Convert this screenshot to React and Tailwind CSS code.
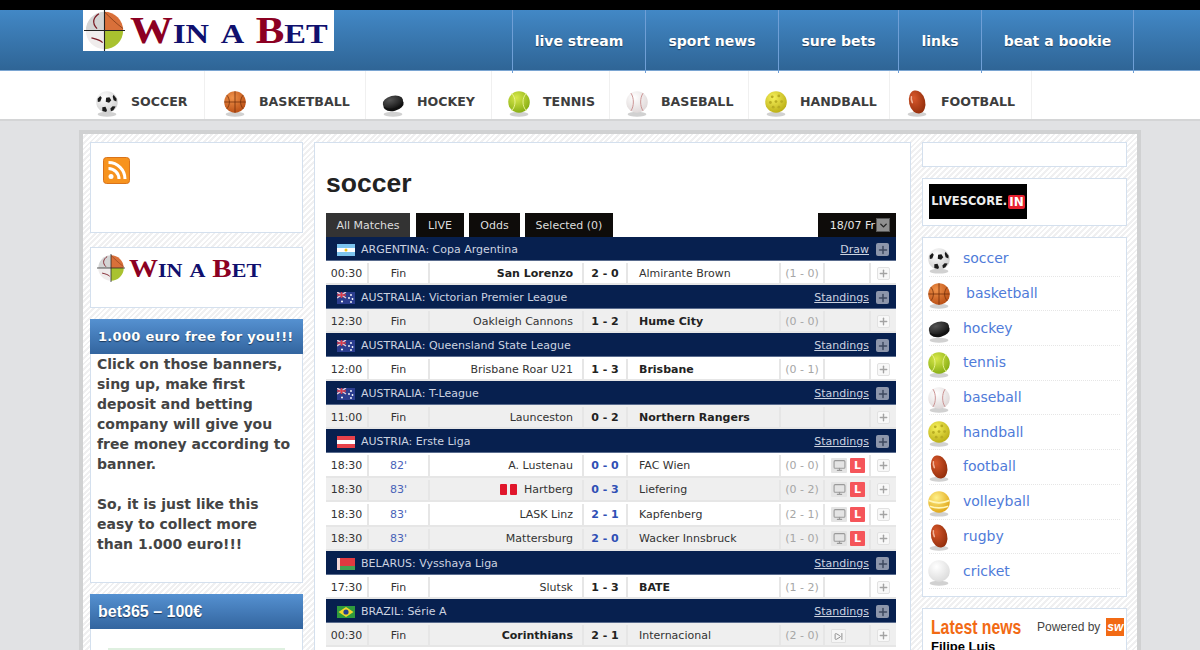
import { Monitor, Plus, ChevronDown, SkipForward } from 'lucide-react'

const hatch = 'bg-[repeating-linear-gradient(135deg,#ffffff_0px,#ffffff_2px,#f0f0f1_2px,#f0f0f1_4px)]'

const navLinks = [
  { label: 'live stream', w: 'w-[133px]' },
  { label: 'sport news', w: 'w-[133px]' },
  { label: 'sure bets', w: 'w-[120px]' },
  { label: 'links', w: 'w-[83px]' },
  { label: 'beat a bookie', w: 'w-[152px]' },
]

const sports = [
  { kind: 'soccer', label: 'SOCCER', w: 'w-[125px] pl-[12px]' },
  { kind: 'basketball', label: 'BASKETBALL', w: 'w-[161px] pl-[15px]' },
  { kind: 'hockey', label: 'HOCKEY', w: 'w-[126px] pl-[12px]' },
  { kind: 'tennis', label: 'TENNIS', w: 'w-[118px] pl-[12px]' },
  { kind: 'baseball', label: 'BASEBALL', w: 'w-[139px] pl-[12px]' },
  { kind: 'handball', label: 'HANDBALL', w: 'w-[141px] pl-[12px]' },
  { kind: 'football', label: 'FOOTBALL', w: 'w-[142px] pl-[12px]' },
]

const sideSports = ['soccer', 'basketball', 'hockey', 'tennis', 'baseball', 'handball', 'football', 'volleyball', 'rugby', 'cricket']

const leagues = [
  {
    flag: 'ar', name: 'ARGENTINA: Copa Argentina', link: 'Draw',
    rows: [{ t: '00:30', s: 'Fin', home: 'San Lorenzo', score: '2 - 0', away: 'Almirante Brown', ht: '(1 - 0)', win: 'home', alt: false }],
  },
  {
    flag: 'au', name: 'AUSTRALIA: Victorian Premier League', link: 'Standings',
    rows: [{ t: '12:30', s: 'Fin', home: 'Oakleigh Cannons', score: '1 - 2', away: 'Hume City', ht: '(0 - 0)', win: 'away', alt: true }],
  },
  {
    flag: 'au', name: 'AUSTRALIA: Queensland State League', link: 'Standings',
    rows: [{ t: '12:00', s: 'Fin', home: 'Brisbane Roar U21', score: '1 - 3', away: 'Brisbane', ht: '(0 - 1)', win: 'away', alt: false }],
  },
  {
    flag: 'au', name: 'AUSTRALIA: T-League', link: 'Standings',
    rows: [{ t: '11:00', s: 'Fin', home: 'Launceston', score: '0 - 2', away: 'Northern Rangers', ht: '', win: 'away', alt: true }],
  },
  {
    flag: 'at', name: 'AUSTRIA: Erste Liga', link: 'Standings',
    rows: [
      { t: '18:30', s: "82'", home: 'A. Lustenau', score: '0 - 0', away: 'FAC Wien', ht: '(0 - 0)', live: true, alt: false },
      { t: '18:30', s: "83'", home: 'Hartberg', score: '0 - 3', away: 'Liefering', ht: '(0 - 2)', live: true, cards: true, alt: true },
      { t: '18:30', s: "83'", home: 'LASK Linz', score: '2 - 1', away: 'Kapfenberg', ht: '(2 - 1)', live: true, alt: false },
      { t: '18:30', s: "83'", home: 'Mattersburg', score: '2 - 0', away: 'Wacker Innsbruck', ht: '(1 - 0)', live: true, alt: true },
    ],
  },
  {
    flag: 'by', name: 'BELARUS: Vysshaya Liga', link: 'Standings',
    rows: [{ t: '17:30', s: 'Fin', home: 'Slutsk', score: '1 - 3', away: 'BATE', ht: '(1 - 2)', win: 'away', alt: false }],
  },
  {
    flag: 'br', name: 'BRAZIL: Série A', link: 'Standings',
    rows: [{ t: '00:30', s: 'Fin', home: 'Corinthians', score: '2 - 1', away: 'Internacional', ht: '(2 - 0)', win: 'home', video: true, alt: true }],
  },
]

function Ball({ kind, size = 30 }) {
  const colors = {
    soccer: ['#ffffff', '#c9c9c9'],
    basketball: ['#f0924a', '#b5480f'],
    tennis: ['#d8e84a', '#7fa80f'],
    baseball: ['#ffffff', '#dcd4d4'],
    handball: ['#f6f05a', '#b5a80f'],
    volleyball: ['#fff08a', '#dd9f0a'],
    cricket: ['#ffffff', '#d8d8d8'],
    hockey: ['#555555', '#111111'],
    football: ['#d9582c', '#8c2a08'],
    rugby: ['#d9582c', '#8c2a08'],
  }
  const [from, to] = colors[kind]
  const fill = `url(#ball-${kind})`
  return (
    <svg width={size} height={size} viewBox="0 -1.5 32 32" className="shrink-0">
      <defs>
        <radialGradient id={`ball-${kind}`} cx="0.38" cy="0.3" r="0.8">
          <stop offset="0" stopColor={from} />
          <stop offset="1" stopColor={to} />
        </radialGradient>
      </defs>
      <ellipse cx="16" cy="27.5" rx="10" ry="2.6" fill="#9a9a9a" opacity="0.45" />
      {kind === 'hockey' && (
        <g transform="rotate(-14 16 15)">
          <ellipse cx="16" cy="17.5" rx="11" ry="6.5" fill="#111" />
          <ellipse cx="16" cy="14.5" rx="11" ry="6.5" fill={fill} />
        </g>
      )}
      {(kind === 'football' || kind === 'rugby') && (
        <g transform="rotate(-14 16 14)">
          <ellipse cx="16" cy="14.5" rx="8.6" ry="12.5" fill={fill} />
          <path d="M11.5 7.5c-1 2-1 4.5-.6 6.5" stroke="#f2b49a" strokeWidth="1.6" fill="none" strokeLinecap="round" />
        </g>
      )}
      {!['hockey', 'football', 'rugby'].includes(kind) && <circle cx="16" cy="14.5" r="11.5" fill={fill} />}
      {kind === 'soccer' && (
        <g fill="#1b1b1b">
          <path d="M15 10l3.6-.6 2 3.1-2.4 2.9-3.5-1.1z" />
          <path d="M6 11l2.8-3 1.6 2-1.6 4-2.6.6z" />
          <path d="M23 6.8l3.2 4.2-.2 3-2.9-1.4-1-3.6z" />
          <path d="M11 20l3.4-.4 1.6 3.6-1 2-4-1.2z" />
          <path d="M22 19l3.2.4-2.4 4-2.6 1-.6-3z" />
        </g>
      )}
      {kind === 'basketball' && (
        <g stroke="#6e2c08" strokeWidth="0.8" fill="none">
          <path d="M4.5 14.5h23M16 3v23" />
          <path d="M7 7c4 4 4 11 0 15M25 7c-4 4-4 11 0 15" />
        </g>
      )}
      {kind === 'tennis' && <path d="M8 5c5 5 5 14 0 19M24 5c-5 5-5 14 0 19" stroke="#eef59a" strokeWidth="0.9" fill="none" />}
      {kind === 'baseball' && <path d="M9.5 5c3.5 5 3.5 14 0 19M22.5 5c-3.5 5-3.5 14 0 19" stroke="#c98f8f" strokeWidth="1" fill="none" />}
      {kind === 'handball' && (
        <g fill="#b9ad22">
          <circle cx="12" cy="9" r="1.5" /><circle cx="19" cy="8" r="1.5" /><circle cx="10" cy="15" r="1.5" />
          <circle cx="16" cy="14" r="1.5" /><circle cx="22" cy="14" r="1.5" /><circle cx="13" cy="20" r="1.5" /><circle cx="19" cy="20" r="1.5" />
        </g>
      )}
      {kind === 'volleyball' && <path d="M5 13c7 3 15 3 22 0M6 19c6 2 14 2 20 0" stroke="#fff6b8" strokeWidth="1.8" fill="none" />}
    </svg>
  )
}

function LogoBall({ size }) {
  return (
    <svg width={size} height={size} viewBox="0 0 44 44" className="shrink-0">
      <path d="M22 22V2a20 20 0 0 1 20 20z" fill="#d9703a" />
      <path d="M22 22h20a20 20 0 0 1-20 20z" fill="#a9c22f" />
      <path d="M22 22v20A20 20 0 0 1 2 22z" fill="#efecec" />
      <path d="M22 22H2A20 20 0 0 1 22 2z" fill="#d4d4d4" />
      <path d="M16 4c-6 4-8 10-2 16M8 30c4 1 9 2 12 5" stroke="#7a1b25" strokeWidth="1.4" fill="none" />
      <path d="M22 2c6 6 12 12 20 18" stroke="#7c3613" strokeWidth="0.8" fill="none" />
      <path d="M22 0v44M0 22h44" stroke="#222" strokeWidth="1.2" />
    </svg>
  )
}

function RssIcon() {
  return (
    <svg width="27" height="27" viewBox="0 0 27 27">
      <rect x="0.5" y="0.5" width="26" height="26" rx="3" fill="#f7931e" stroke="#d9731a" />
      <circle cx="8" cy="19.5" r="2.5" fill="#fff" />
      <path d="M5.5 11.5a10.5 10.5 0 0 1 10.5 10.5" stroke="#fff" strokeWidth="3" fill="none" />
      <path d="M5.5 5.5a16.5 16.5 0 0 1 16.5 16.5" stroke="#fff" strokeWidth="3" fill="none" />
    </svg>
  )
}

function Flag({ code }) {
  return (
    <svg width="18" height="12" viewBox="0 0 18 12" className="shrink-0">
      {code === 'ar' && (
        <>
          <rect width="18" height="12" fill="#fff" />
          <rect width="18" height="4" fill="#7cc4ee" />
          <rect y="8" width="18" height="4" fill="#7cc4ee" />
          <circle cx="9" cy="6" r="1.5" fill="#f0c419" />
        </>
      )}
      {code === 'au' && (
        <>
          <rect width="18" height="12" fill="#2b3d8f" />
          <path d="M0 0l9 6M9 0L0 6" stroke="#e8c8d0" strokeWidth="1.5" />
          <path d="M4.5 0v6M0 3h9" stroke="#d63a4a" strokeWidth="1.5" />
          <circle cx="14" cy="3" r="0.9" fill="#fff" /><circle cx="12" cy="6" r="0.9" fill="#fff" /><circle cx="15.5" cy="7" r="0.9" fill="#fff" /><circle cx="14" cy="10" r="0.9" fill="#fff" /><circle cx="5" cy="9.5" r="1" fill="#fff" />
        </>
      )}
      {code === 'at' && (
        <>
          <rect width="18" height="12" fill="#e8414a" />
          <rect y="4" width="18" height="4" fill="#fff" />
        </>
      )}
      {code === 'by' && (
        <>
          <rect width="18" height="8" fill="#e23a40" />
          <rect y="8" width="18" height="4" fill="#46a152" />
          <rect width="3" height="12" fill="#f4d8d8" />
        </>
      )}
      {code === 'br' && (
        <>
          <rect width="18" height="12" fill="#2f9a3d" />
          <path d="M9 1l7.5 5L9 11 1.5 6z" fill="#f3d72a" />
          <circle cx="9" cy="6" r="2.6" fill="#27408f" />
        </>
      )}
    </svg>
  )
}

function Logo({ big }) {
  if (big) {
    return (
      <div className="flex items-center h-[41px] w-[251px] bg-white pl-[1px] font-['Liberation_Serif',serif] font-bold">
        <LogoBall size={41} />
        <span className="ml-[5px] flex origin-left scale-x-[1.16] items-baseline whitespace-nowrap leading-none">
          <span className="text-[37px] text-[#8c0022]">W</span>
          <span className="text-[28px] text-[#10106e]">IN</span>
          <span className="ml-[10px] text-[28px] text-[#10106e]">A</span>
          <span className="ml-[10px] text-[37px] text-[#8c0022]">B</span>
          <span className="text-[28px] text-[#10106e]">ET</span>
        </span>
      </div>
    )
  }
  return (
    <div className="flex items-center h-[28px] font-['Liberation_Serif',serif] font-bold">
      <LogoBall size={28} />
      <span className="ml-[4px] flex origin-left scale-x-[1.16] items-baseline whitespace-nowrap leading-none">
        <span className="text-[25px] text-[#8c0022]">W</span>
        <span className="text-[19px] text-[#10106e]">IN</span>
        <span className="ml-[6px] text-[19px] text-[#10106e]">A</span>
        <span className="ml-[6px] text-[25px] text-[#8c0022]">B</span>
        <span className="text-[19px] text-[#10106e]">ET</span>
      </span>
    </div>
  )
}

function BoxPlus({ dark }) {
  return dark ? (
    <span className="flex h-[13px] w-[13px] items-center justify-center rounded-[2px] bg-[#8d96ab]">
      <Plus size={12} strokeWidth={3} className="text-[#3f4a60]" />
    </span>
  ) : (
    <span className="flex h-[13px] w-[13px] items-center justify-center rounded-[2px] border border-[#e2e2e2] bg-[#f8f8f8]">
      <Plus size={11} strokeWidth={3} className="text-[#a3a3a3]" />
    </span>
  )
}

function LeagueRow({ league }) {
  return (
    <div className="flex h-6 items-center bg-[#07204f] border-b border-[#5a6c8e] pl-[11px] pt-[2px] text-[#ccd3e0]">
      <Flag code={league.flag} />
      <span className="ml-[6px] flex-1">{league.name}</span>
      <a className="underline">{league.link}</a>
      <span className="ml-[7px] mr-[7px]"><BoxPlus dark /></span>
    </div>
  )
}

function MatchRow({ row }) {
  const bg = row.alt ? 'bg-[#efefef]' : 'bg-white'
  const height = row.live ? 'h-[24.5px]' : 'h-6'
  const scoreColor = row.live ? 'text-[#2f4fb5]' : 'text-[#222]'
  return (
    <div className={`flex ${height} items-center border-b-2 border-[#e6e6e6] pt-[2px] text-[#333] ${bg}`}>
      <div className="flex h-full w-[43px] items-center justify-center border-r-2 border-[#e6e6e6]">{row.t}</div>
      <div className={`flex h-full w-[61px] items-center justify-center border-r-2 border-[#e6e6e6] ${row.live ? 'text-[#4a63b8]' : ''}`}>{row.s}</div>
      <div className={`flex h-full w-[154px] items-center justify-end gap-[7px] border-r-2 border-[#e6e6e6] pr-[9px] ${row.win === 'home' ? 'font-bold text-[#222]' : ''}`}>
        {row.cards && (
          <span className="flex gap-[3px]">
            <span className="h-[11px] w-[7px] rounded-[1px] bg-[#e0162b]" />
            <span className="h-[11px] w-[7px] rounded-[1px] bg-[#e0162b]" />
          </span>
        )}
        {row.home}
      </div>
      <div className={`flex h-full w-[44px] items-center justify-center border-r-2 border-[#e6e6e6] font-bold ${scoreColor}`}>{row.score}</div>
      <div className={`flex h-full w-[153px] items-center border-r-2 border-[#e6e6e6] pl-[11px] ${row.win === 'away' ? 'font-bold text-[#222]' : ''}`}>{row.away}</div>
      <div className="flex h-full w-[44px] items-center justify-center border-r-2 border-[#e6e6e6] text-[#a6a6a6]">{row.ht}</div>
      <div className="flex h-full w-[46px] items-center gap-[3px] border-r-2 border-[#e6e6e6] pl-[6px]">
        {row.live && (
          <>
            <span className="flex h-[15px] w-[16px] items-center justify-center rounded-[1px] bg-[#e4e4e4]">
              <Monitor size={13} strokeWidth={2} className="text-[#9a9a9a]" />
            </span>
            <span className="flex h-[15px] w-[15px] items-center justify-center rounded-[1px] bg-[#f5555a] text-[11px] font-bold text-white">L</span>
          </>
        )}
        {row.video && (
          <span className="mt-[2px] flex h-[14px] w-[15px] items-center justify-center rounded-[1px] border border-[#e0e0e0] bg-[#f5f5f5]">
            <SkipForward size={9} strokeWidth={2.5} className="text-[#8a8a8a]" />
          </span>
        )}
      </div>
      <div className="flex h-full w-[25px] items-center justify-center">
        <BoxPlus />
      </div>
    </div>
  )
}

export default function App() {
  return (
    <div className="h-[650px] w-[1200px] overflow-hidden bg-[#e1e2e4] font-['DejaVu_Sans',sans-serif]">
      <div className="h-[10px] bg-black" />
      <header className="h-[61px] bg-linear-to-b from-[#4288c6] to-[#2f6596] border-b border-[#7aa5d2]">
        <div className="flex items-start">
          <div className="ml-[83px] w-[429px]">
            <Logo big />
          </div>
          <nav className="flex h-[63px] border-l border-[#6f9fd6]">
            {navLinks.map(link => (
              <a key={link.label} className={`${link.w} flex items-center justify-center border-r border-[#6f9fd6] text-[14px] font-bold text-white [text-shadow:0_1px_1px_#1e3d5c]`}>
                {link.label}
              </a>
            ))}
          </nav>
        </div>
      </header>

      <div className="h-[50px] bg-white border-b-2 border-[#d4d5d6]">
        <div className="ml-[80px] flex h-full">
          {sports.map(sport => (
            <div key={sport.kind} className={`${sport.w} flex items-center gap-[9px] border-r border-[#f0f0f0] pt-[14px] text-[12.6px] font-bold text-[#3d3d3d]`}>
              <Ball kind={sport.kind} />
              <span>{sport.label}</span>
            </div>
          ))}
        </div>
      </div>

      <div className={`ml-[79px] mt-[9px] w-[1062px] border-4 border-[#d0d1d2] ${hatch} pl-[7px] pt-[8px]`}>
        <div className="flex items-start">
          {/* left column */}
          <aside className="w-[213px] shrink-0">
            <div className="h-[91px] border border-[#d4e0ee] bg-white pl-[12px] pt-[14px]">
              <RssIcon />
            </div>
            <div className="mt-[14px] h-[61px] border border-[#d4e0ee] bg-white pl-[6px] pt-[6px]">
              <Logo />
            </div>
            <div className="mt-[11px] flex h-[35px] items-center whitespace-nowrap bg-linear-to-b from-[#5591d1] to-[#33659f] pl-[8px] text-[13px] font-bold tracking-[0.3px] text-white [text-shadow:0_1px_1px_#1c3a5e]">
              1.000 euro free for you!!!
            </div>
            <div className="h-[229px] border border-t-0 border-[#d4e0ee] bg-white pl-[6px] text-[14px] font-bold leading-[20px] text-[#444]">
              Click on those banners,<br />
              sing up, make first<br />
              deposit and betting<br />
              company will give you<br />
              free money according to<br />
              banner.<br />
              <br />
              So, it is just like this<br />
              easy to collect more<br />
              than 1.000 euro!!!
            </div>
            <div className="mt-[11px] flex h-[35px] items-center bg-linear-to-b from-[#5591d1] to-[#33659f] pl-[8px] font-['Liberation_Sans',sans-serif] text-[16px] font-bold text-white [text-shadow:0_1px_1px_#1c3a5e]">
              bet365 – 100€
            </div>
            <div className="h-[40px] border border-t-0 border-[#d4e0ee] bg-white px-[17px] pt-[19px]">
              <div className="h-[2px] bg-[#dff0e0]" />
            </div>
          </aside>

          {/* middle column */}
          <main className="ml-[11px] h-[520px] w-[597px] shrink-0 border border-[#d4e0ee] bg-white pl-[11px] pt-[24px]">
            <h1 className="font-['Liberation_Sans',sans-serif] text-[26.5px] font-bold leading-[32px] text-[#222]">soccer</h1>
            <div className="mt-[14px] w-[570px] text-[11px] leading-none">
              <div className="flex h-6 items-stretch text-[#ddd]">
                <span className="flex w-[84px] items-center justify-center bg-[#333]">All Matches</span>
                <span className="ml-[6px] flex w-[48px] items-center justify-center bg-[#0e0c0a]">LIVE</span>
                <span className="ml-[5px] flex w-[51px] items-center justify-center bg-[#0e0c0a]">Odds</span>
                <span className="ml-[5px] flex w-[88px] items-center justify-center bg-[#0e0c0a]">Selected (0)</span>
                <span className="ml-auto flex w-[78px] items-center justify-end gap-[1px] bg-[#0e0c0a] pr-[6px] text-[#e6e6e6]">
                  18/07 Fr
                  <span className="flex h-[14px] w-[14px] items-center justify-center border border-[#555] bg-[#8f8f8f]">
                    <ChevronDown size={11} strokeWidth={3} className="text-[#222]" />
                  </span>
                </span>
              </div>
              {leagues.map(league => (
                <div key={league.name}>
                  <LeagueRow league={league} />
                  {league.rows.map(row => (
                    <MatchRow key={row.home} row={row} />
                  ))}
                </div>
              ))}
            </div>
          </main>

          {/* right column */}
          <aside className="ml-[11px] w-[205px] shrink-0">
            <div className="h-[25px] border border-[#d4e0ee] bg-white" />
            <div className="mt-[11px] h-[48px] border border-[#d4e0ee] bg-white pl-[6px] pt-[5px]">
              <div className="flex h-[35px] w-[98px] items-center justify-center gap-[1px] bg-black text-[11.5px] font-bold text-[#eee]">
                LIVESCORE.
                <span className="rounded-[2px] bg-[#e5202e] px-[1px] text-[12px] leading-[14px] text-white">IN</span>
              </div>
            </div>
            <div className="mt-[11px] h-[360px] border border-[#d4e0ee] bg-white px-[6px] pt-[4px]">
              {sideSports.map(kind => (
                <div key={kind} className="flex h-[34.7px] items-center border-b border-dotted border-[#e6e6e6] text-[14px] text-[#4f7bd9]">
                  <span className="-ml-[5px]"><Ball kind={kind} /></span>
                  <span className={kind === 'basketball' ? 'ml-[12px]' : 'ml-[9px]'}>{kind}</span>
                </div>
              ))}
            </div>
            <div className="mt-[11px] h-[60px] border border-[#d4e0ee] bg-white pl-[8px] pt-[6px]">
              <div className="flex items-center">
                <span className="w-[106px] origin-left scale-x-[0.75] whitespace-nowrap font-['Liberation_Sans',sans-serif] text-[21px] font-bold leading-[24px] text-[#f26a14]">Latest news</span>
                <span className="whitespace-nowrap font-['Liberation_Sans',sans-serif] text-[12px] text-[#444]">Powered by</span>
                <span className="ml-[6px] flex h-[18px] w-[18px] items-center justify-center bg-[#f26a14] font-['Liberation_Sans',sans-serif] text-[12px] font-bold italic leading-none text-white">sw</span>
              </div>
              <div className="font-['Liberation_Sans',sans-serif] text-[13px] font-bold leading-[16px] text-black">Filipe Luis</div>
            </div>
          </aside>
        </div>
      </div>
    </div>
  )
}
